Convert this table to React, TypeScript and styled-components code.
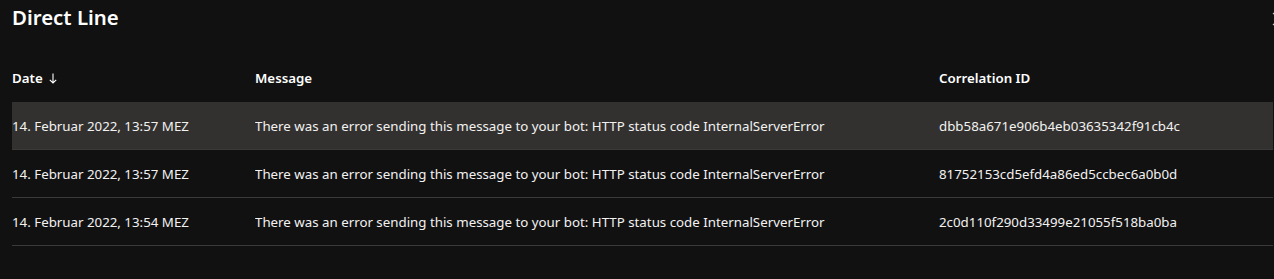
import styled, { createGlobalStyle } from "styled-components";

const GlobalStyle = createGlobalStyle`
  html, body {
    margin: 0;
    padding: 0;
    background: #111111;
    overflow: hidden;
  }
  body {
    font-family: "Noto Sans", "Open Sans", sans-serif;
    color: #f3f2f1;
  }
`;

const Page = styled.div`
  position: relative;
  width: 1274px;
  height: 279px;
  padding: 0 0 0 12px;
  box-sizing: border-box;
  background: #111111;
`;

const Title = styled.h1`
  margin: 0;
  padding-top: 3px;
  height: 51px;
  font-size: 20.4px;
  font-weight: 600;
  line-height: 28px;
  color: #ffffff;
`;

const CloseButton = styled.button`
  position: absolute;
  top: 12px;
  right: -14px;
  width: 16px;
  height: 16px;
  padding: 0;
  border: none;
  background: none;
  color: #c8c6c4;
`;

const Table = styled.div`
  width: 1261px;
`;

const Row = styled.div<{ $header?: boolean; $selected?: boolean }>`
  display: grid;
  grid-template-columns: 243px 684px 1fr;
  align-items: center;
  height: ${(p) => (p.$header ? "48px" : "47px")};
  border-bottom: ${(p) => (p.$header ? "none" : "1px solid #3b3a39")};
  background: ${(p) => (p.$selected ? "#323130" : "transparent")};
  font-size: 13.3px;
  font-weight: ${(p) => (p.$header ? 600 : 400)};
  color: ${(p) => (p.$header ? "#ffffff" : "#f3f2f1")};
`;

const Cell = styled.div`
  display: flex;
  align-items: center;
  gap: 6px;
  white-space: nowrap;
  overflow: hidden;
`;

const SortArrow = styled.svg`
  width: 8px;
  height: 11px;
  margin-top: 1px;
`;

const rows = [
  {
    date: "14. Februar 2022, 13:57 MEZ",
    id: "dbb58a671e906b4eb03635342f91cb4c",
  },
  {
    date: "14. Februar 2022, 13:57 MEZ",
    id: "81752153cd5efd4a86ed5ccbec6a0b0d",
  },
  {
    date: "14. Februar 2022, 13:54 MEZ",
    id: "2c0d110f290d33499e21055f518ba0ba",
  },
];

const message =
  "There was an error sending this message to your bot: HTTP status code InternalServerError";

export default function App() {
  return (
    <>
      <GlobalStyle />
      <Page>
        <Title>Direct Line</Title>
        <CloseButton aria-label="Close">
          <svg width="16" height="16" viewBox="0 0 16 16">
            <path d="M1 1 L13 13 M13 1 L1 13" stroke="currentColor" strokeWidth="1.2" />
          </svg>
        </CloseButton>
        <Table>
          <Row $header>
            <Cell>
              Date
              <SortArrow viewBox="0 0 8 11">
                <path
                  d="M4 0.5 V10 M0.8 6.8 L4 10 L7.2 6.8"
                  fill="none"
                  stroke="currentColor"
                  strokeWidth="1.1"
                />
              </SortArrow>
            </Cell>
            <Cell>Message</Cell>
            <Cell>Correlation ID</Cell>
          </Row>
          {rows.map((r, i) => (
            <Row key={r.id} $selected={i === 0}>
              <Cell>{r.date}</Cell>
              <Cell>{message}</Cell>
              <Cell>{r.id}</Cell>
            </Row>
          ))}
        </Table>
      </Page>
    </>
  );
}
